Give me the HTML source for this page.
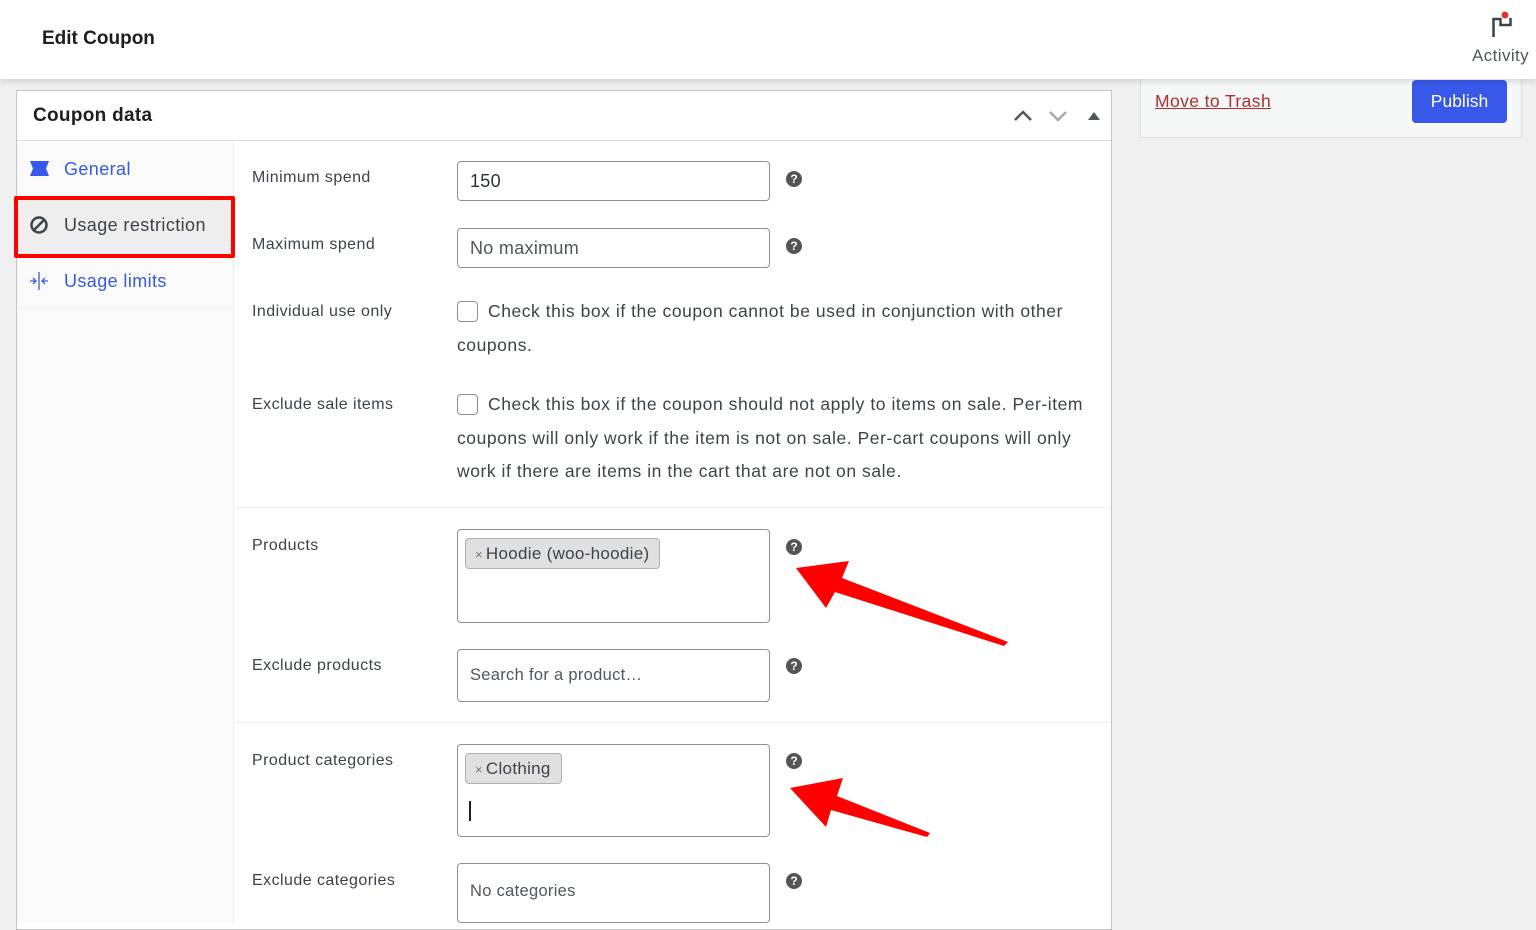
<!DOCTYPE html><html><head><style>
*{box-sizing:border-box;margin:0;padding:0}
body{width:1536px;height:913px;overflow:hidden;background:#f0f0f1;font-family:"Liberation Sans",sans-serif;position:relative;color:#1e1e1e}
.a{position:absolute}
.hdr{left:0;top:0;width:1536px;height:79px;background:#fff;box-shadow:0 2px 6px rgba(0,0,0,.15);z-index:5}
.panel{left:16px;top:90px;width:1096px;height:840px;background:#fff;border:1px solid #c3c4c7}
.lbl{font-size:16px;color:#3c434a;left:252px;letter-spacing:.45px}
.inp{left:457px;width:313px;border:1.5px solid #8c8f94;border-radius:4px;background:#fff;font-size:18px;color:#2c3338;padding-left:12px;letter-spacing:.3px}
.help{left:786px;width:16px;height:16px;border-radius:50%;background:#555;color:#fff;font-size:12px;font-weight:bold;text-align:center;line-height:16px}
.cb{left:457px;width:21px;height:21px;border:1.5px solid #8c8f94;border-radius:4px;background:#fff}
.txt{font-size:17.5px;color:#3c434a;line-height:33.5px;letter-spacing:.55px}
.tag{left:465px;height:31px;background:#e0e0e0;border:1px solid #b0b0b0;border-radius:4px;font-size:17px;color:#3c434a;line-height:29px;padding:0 10px 0 9px;letter-spacing:.3px}
.tag span{font-size:13px;color:#777;margin-right:3px}
</style></head><body>
<div class="a hdr">
<div class="a" style="left:42px;top:28px;font-size:19px;font-weight:bold;color:#1e1e1e">Edit Coupon</div>
<svg class="a" style="left:1490px;top:9px" width="26" height="30" viewBox="0 0 26 30"><path d="M3.5 28V10h7v6h10V9" fill="none" stroke="#3c434a" stroke-width="2.5"/><circle cx="15" cy="6" r="3.5" fill="#d63638"/></svg>
<div class="a" style="left:1472px;top:46px;font-size:17px;color:#50575e;letter-spacing:.4px">Activity</div>
</div>
<div class="a" style="left:1140px;top:70px;width:382px;height:68px;background:#f6f7f7;border:1px solid #dcdcde"></div>
<div class="a" style="left:1155px;top:91px;font-size:17.5px;color:#b32d2e;text-decoration:underline;letter-spacing:.4px">Move to Trash</div>
<div class="a" style="left:1412px;top:80px;width:95px;height:43px;background:#3858e9;border-radius:4px;color:#fff;font-size:17.5px;text-align:center;line-height:43px">Publish</div>
<div class="a panel"></div>
<div class="a" style="left:17px;top:91px;width:1094px;height:50px;border-bottom:1px solid #dcdcde"></div>
<div class="a" style="left:33px;top:105px;font-size:19px;font-weight:bold;letter-spacing:.3px">Coupon data</div>
<svg class="a" style="left:1012px;top:108px" width="95" height="16"><path d="M3 12l8-8 8 8" fill="none" stroke="#50575e" stroke-width="2.5"/><path d="M38 4l8 8 8-8" fill="none" stroke="#a7aaad" stroke-width="2.5"/><path d="M76 12l6-8 6 8z" fill="#50575e"/></svg>
<div class="a" style="left:17px;top:142px;width:217px;height:780px;background:#fafafa;border-right:1px solid #eee"></div>
<div class="a" style="left:17px;top:307px;width:217px;height:1px;background:#eee"></div>
<svg class="a" style="left:30px;top:161px" width="19" height="15"><path d="M0 0h19l-3 7.5 3 7.5H0l3-7.5z" fill="#3858e9"/></svg>
<div class="a" style="left:64px;top:159px;font-size:18px;color:#3858e9;letter-spacing:.4px">General</div>
<div class="a" style="left:17px;top:199px;width:217px;height:56px;background:#eee"></div>
<div class="a" style="left:14px;top:196px;width:221px;height:62px;border:4px solid #ff0000;border-radius:2px"></div>
<svg class="a" style="left:29px;top:215px" width="20" height="20"><circle cx="10" cy="10" r="7.5" fill="none" stroke="#3c434a" stroke-width="2.5"/><path d="M5 15L15 5" stroke="#3c434a" stroke-width="2.5"/></svg>
<div class="a" style="left:64px;top:215px;font-size:18px;color:#3c434a;letter-spacing:.4px">Usage restriction</div>
<svg class="a" style="left:29px;top:271px" width="20" height="20"><path d="M10 1v18M1 10h6M13 10h6M4 7l3 3-3 3M16 7l-3 3 3 3" fill="none" stroke="#3858e9" stroke-width="1.3"/></svg>
<div class="a" style="left:64px;top:271px;font-size:18px;color:#3858e9;letter-spacing:.4px">Usage limits</div>

<div class="a lbl" style="top:169px">Minimum spend</div>
<div class="a inp" style="top:161px;height:40px;line-height:38px">150</div>
<div class="a help" style="top:171px">?</div>
<div class="a lbl" style="top:236px">Maximum spend</div>
<div class="a inp" style="top:228px;height:40px;line-height:38px;color:#50575e">No maximum</div>
<div class="a help" style="top:238px">?</div>
<div class="a lbl" style="top:303px">Individual use only</div>
<div class="a cb" style="top:301px"></div>
<div class="a txt" style="left:457px;top:295px;width:640px;text-indent:31px">Check this box if the coupon cannot be used in conjunction with other coupons.</div>
<div class="a lbl" style="top:396px">Exclude sale items</div>
<div class="a cb" style="top:394px"></div>
<div class="a txt" style="left:457px;top:388px;width:632px;text-indent:31px">Check this box if the coupon should not apply to items on sale. Per-item coupons will only work if the item is not on sale. Per-cart coupons will only work if there are items in the cart that are not on sale.</div>
<div class="a" style="left:235px;top:507px;width:876px;height:1px;background:#eee"></div>
<div class="a lbl" style="top:537px">Products</div>
<div class="a inp" style="top:529px;height:94px"></div>
<div class="a tag" style="top:538px"><span>×</span>Hoodie (woo-hoodie)</div>
<div class="a help" style="top:539px">?</div>
<div class="a lbl" style="top:657px">Exclude products</div>
<div class="a inp" style="top:649px;height:53px;line-height:51px;font-size:16.5px;color:#50575e">Search for a product…</div>
<div class="a help" style="top:658px">?</div>
<div class="a" style="left:235px;top:722px;width:876px;height:1px;background:#eee"></div>
<div class="a lbl" style="top:752px">Product categories</div>
<div class="a inp" style="top:744px;height:93px"></div>
<div class="a tag" style="top:753px"><span>×</span>Clothing</div>
<div class="a" style="left:469px;top:801px;width:1.5px;height:20px;background:#1e1e1e"></div>
<div class="a help" style="top:753px">?</div>
<div class="a lbl" style="top:872px">Exclude categories</div>
<div class="a inp" style="top:863px;height:60px;line-height:54px;font-size:16.5px;color:#50575e">No categories</div>
<div class="a help" style="top:873px">?</div>
<svg class="a" style="left:0;top:0" width="1536" height="913"><path d="M796 568L849 561L842 578L1008 642L1004 646L835 592L826 608Z" fill="#ff0000"/><path d="M790 788L843 778L837 796L930 833L927 837L831 810L826 827Z" fill="#ff0000"/></svg>
</body></html>
